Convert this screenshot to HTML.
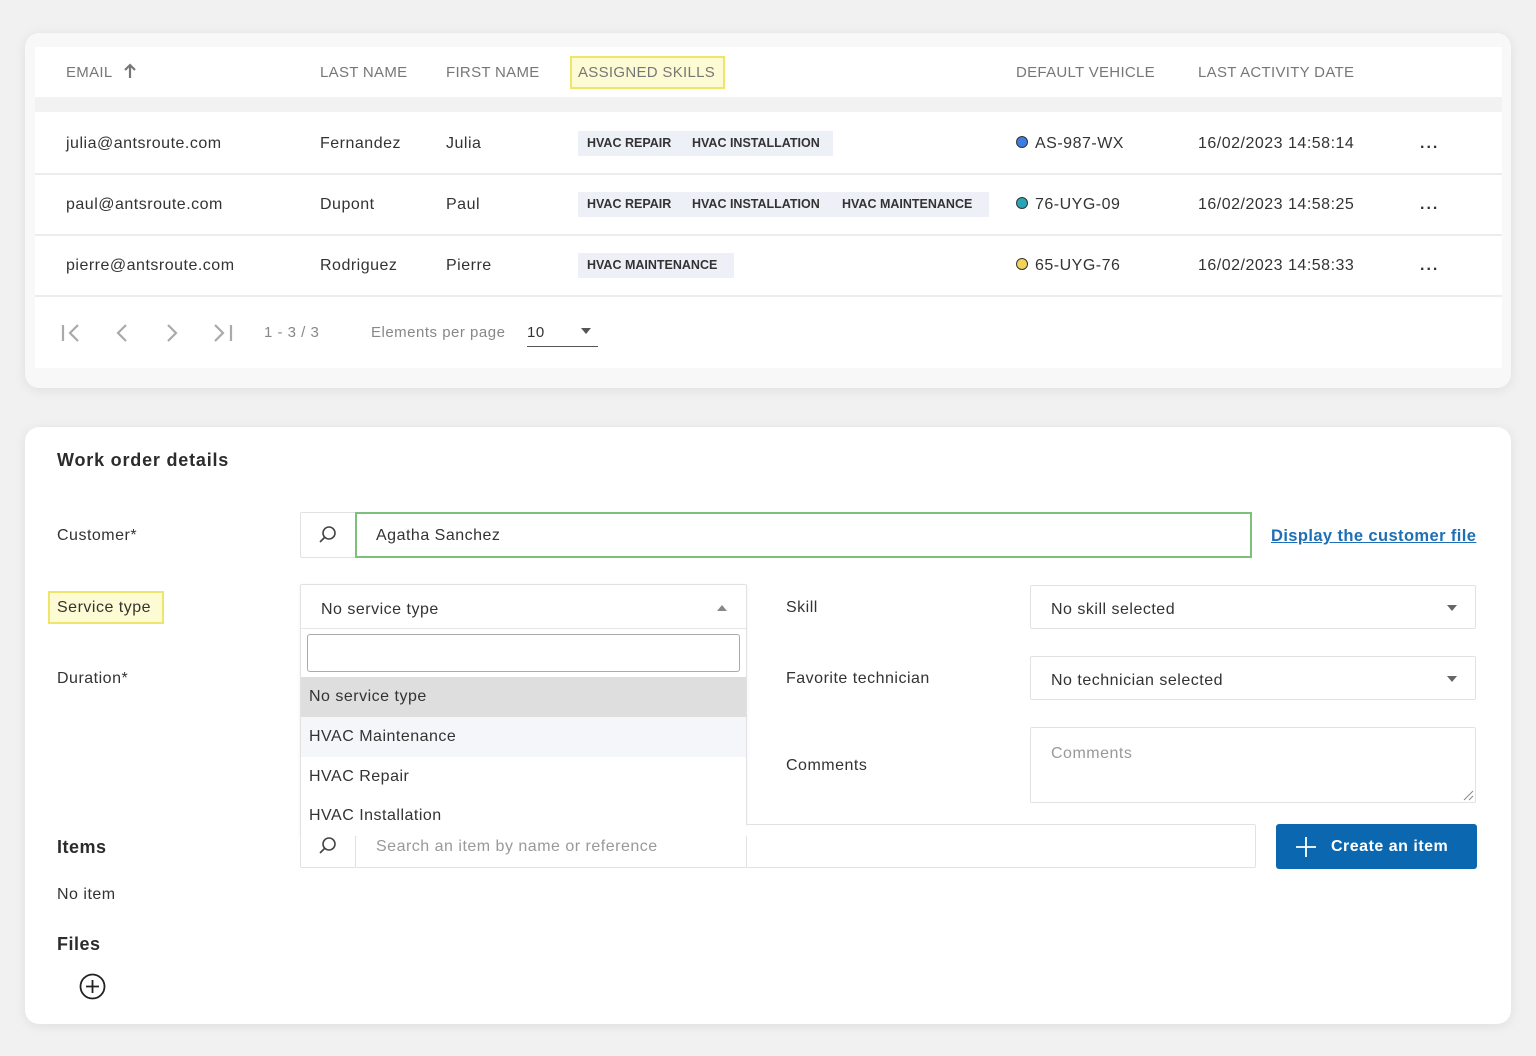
<!DOCTYPE html>
<html><head><meta charset="utf-8">
<style>
*{margin:0;padding:0;box-sizing:border-box}
body{width:1536px;height:1056px;background:#f1f1f1;font-family:"Liberation Sans",sans-serif;color:#333;position:relative;overflow:hidden}
.a{position:absolute}
.t{position:absolute;white-space:nowrap;line-height:18px;font-size:16px;letter-spacing:0.5px}
.card{position:absolute;border-radius:14px;box-shadow:0 2px 12px rgba(0,0,0,.08)}
.hd{color:#777;font-size:15px;letter-spacing:0.3px}
.chip{position:absolute;top:0;height:25px;background:#edf0f7;font-size:12.5px;font-weight:bold;color:#333;line-height:25px;padding-left:9px}
.dot{position:absolute;width:12px;height:12px;border-radius:50%;border:1.5px solid #333}
.box{position:absolute;border:1px solid #e2e2e2;background:#fff;border-radius:2px}
.tri{position:absolute;width:0;height:0;border-left:5px solid transparent;border-right:5px solid transparent}
</style></head><body>

<div class="card" style="left:25px;top:33px;width:1486px;height:355px;background:#f8f8f8"></div>
<div class="a" style="left:35px;top:47px;width:1467px;height:321px;background:#fff"></div>
<div class="a" style="left:35px;top:97px;width:1467px;height:15px;background:#f2f2f2"></div>
<div class="a" style="left:35px;top:173px;width:1467px;height:2px;background:#ececec"></div>
<div class="a" style="left:35px;top:234px;width:1467px;height:2px;background:#ececec"></div>
<div class="a" style="left:35px;top:295px;width:1467px;height:2px;background:#ececec"></div>

<div class="t hd" style="left:66px;top:64px">EMAIL</div>
<svg class="a" style="left:123px;top:63px" width="14" height="16" viewBox="0 0 14 16"><path d="M7 15V2M2 7l5-5 5 5" stroke="#777" stroke-width="2.2" fill="none"/></svg>
<div class="t hd" style="left:320px;top:64px">LAST NAME</div>
<div class="t hd" style="left:446px;top:64px">FIRST NAME</div>
<div class="a" style="left:570px;top:56px;width:155px;height:33px;background:#fdfbd4;border:2px solid #eee56a"></div>
<div class="t hd" style="left:578px;top:64px">ASSIGNED SKILLS</div>
<div class="t hd" style="left:1016px;top:64px">DEFAULT VEHICLE</div>
<div class="t hd" style="left:1198px;top:64px">LAST ACTIVITY DATE</div>

<div class="t" style="left:66px;top:135px">julia@antsroute.com</div>
<div class="t" style="left:320px;top:135px">Fernandez</div>
<div class="t" style="left:446px;top:135px">Julia</div>
<div class="a" style="left:578px;top:131px"><div class="chip" style="left:0;width:105px">HVAC REPAIR</div><div class="chip" style="left:105px;width:150px">HVAC INSTALLATION</div></div>
<div class="dot" style="left:1016px;top:136px;background:#3b7de0"></div>
<div class="t" style="left:1035px;top:135px">AS-987-WX</div>
<div class="t" style="left:1198px;top:135px">16/02/2023 14:58:14</div>
<div class="t" style="left:1420px;top:135px;font-weight:bold;letter-spacing:2px">...</div>

<div class="t" style="left:66px;top:196px">paul@antsroute.com</div>
<div class="t" style="left:320px;top:196px">Dupont</div>
<div class="t" style="left:446px;top:196px">Paul</div>
<div class="a" style="left:578px;top:192px"><div class="chip" style="left:0;width:105px">HVAC REPAIR</div><div class="chip" style="left:105px;width:150px">HVAC INSTALLATION</div><div class="chip" style="left:255px;width:156px">HVAC MAINTENANCE</div></div>
<div class="dot" style="left:1016px;top:197px;background:#2aa5b5"></div>
<div class="t" style="left:1035px;top:196px">76-UYG-09</div>
<div class="t" style="left:1198px;top:196px">16/02/2023 14:58:25</div>
<div class="t" style="left:1420px;top:196px;font-weight:bold;letter-spacing:2px">...</div>

<div class="t" style="left:66px;top:257px">pierre@antsroute.com</div>
<div class="t" style="left:320px;top:257px">Rodriguez</div>
<div class="t" style="left:446px;top:257px">Pierre</div>
<div class="a" style="left:578px;top:253px"><div class="chip" style="left:0;width:156px">HVAC MAINTENANCE</div></div>
<div class="dot" style="left:1016px;top:258px;background:#f2d35a"></div>
<div class="t" style="left:1035px;top:257px">65-UYG-76</div>
<div class="t" style="left:1198px;top:257px">16/02/2023 14:58:33</div>
<div class="t" style="left:1420px;top:257px;font-weight:bold;letter-spacing:2px">...</div>

<svg class="a" style="left:60px;top:322px" width="180" height="22" viewBox="0 0 180 22">
<g stroke="#aaa" stroke-width="2.2" fill="none">
<path d="M3 3v16M18 3l-8 8 8 8"/><path d="M66 3l-8 8 8 8"/><path d="M108 3l8 8-8 8"/><path d="M155 3l8 8-8 8M171 3v16"/></g></svg>
<div class="t" style="left:264px;top:324px;color:#888;font-size:15px">1 - 3 / 3</div>
<div class="t" style="left:371px;top:324px;color:#888;font-size:15px">Elements per page</div>
<div class="t" style="left:527px;top:324px;font-size:15px">10</div>
<div class="a" style="left:527px;top:346px;width:71px;height:1px;background:#555"></div>
<div class="tri" style="left:581px;top:328px;border-top:6px solid #555"></div>

<div class="card" style="left:25px;top:427px;width:1486px;height:597px;background:#fff"></div>
<div class="t" style="left:57px;top:451px;font-size:18px;font-weight:bold;color:#2c2c2c;letter-spacing:0.8px">Work order details</div>

<div class="t" style="left:57px;top:527px">Customer*</div>
<div class="box" style="left:300px;top:512px;width:56px;height:46px"></div>
<svg class="a" style="left:318px;top:525px" width="20" height="20" viewBox="0 0 20 20"><circle cx="11" cy="8" r="6" stroke="#444" stroke-width="1.6" fill="none"/><path d="M7 12l-5 5" stroke="#444" stroke-width="1.6"/></svg>
<div class="a" style="left:355px;top:512px;width:897px;height:46px;border:2px solid #7cc07c;background:#fff"></div>
<div class="t" style="left:376px;top:527px">Agatha Sanchez</div>
<div class="t" style="left:1271px;top:527px;color:#1e6fb5;font-weight:bold;text-decoration:underline;font-size:16.5px;letter-spacing:0.4px">Display the customer file</div>

<div class="a" style="left:48px;top:591px;width:116px;height:33px;background:#fdfbd4;border:2px solid #eee56a"></div>
<div class="t" style="left:57px;top:599px">Service type</div>
<div class="box" style="left:300px;top:584px;width:447px;height:253px;box-shadow:0 1px 4px rgba(0,0,0,.06)"></div>
<div class="a" style="left:301px;top:628px;width:445px;height:1px;background:#e6e6e6"></div>
<div class="t" style="left:321px;top:601px">No service type</div>
<div class="tri" style="left:717px;top:605px;border-bottom:6px solid #888"></div>
<div class="a" style="left:307px;top:634px;width:433px;height:38px;border:1.5px solid #aaa;border-radius:3px"></div>
<div class="a" style="left:301px;top:677px;width:445px;height:40px;background:#dedede"></div>
<div class="t" style="left:309px;top:688px">No service type</div>
<div class="a" style="left:301px;top:717px;width:445px;height:40px;background:#f4f6f9"></div>
<div class="t" style="left:309px;top:728px">HVAC Maintenance</div>
<div class="t" style="left:309px;top:768px">HVAC Repair</div>
<div class="t" style="left:309px;top:807px">HVAC Installation</div>

<div class="t" style="left:57px;top:670px">Duration*</div>

<div class="t" style="left:786px;top:599px">Skill</div>
<div class="box" style="left:1030px;top:585px;width:446px;height:44px"></div>
<div class="t" style="left:1051px;top:601px">No skill selected</div>
<div class="tri" style="left:1447px;top:605px;border-top:6px solid #666"></div>

<div class="t" style="left:786px;top:670px">Favorite technician</div>
<div class="box" style="left:1030px;top:656px;width:446px;height:44px"></div>
<div class="t" style="left:1051px;top:672px">No technician selected</div>
<div class="tri" style="left:1447px;top:676px;border-top:6px solid #666"></div>

<div class="t" style="left:786px;top:757px">Comments</div>
<div class="box" style="left:1030px;top:727px;width:446px;height:76px"></div>
<div class="t" style="left:1051px;top:745px;color:#999">Comments</div>
<svg class="a" style="left:1462px;top:789px" width="12" height="12"><path d="M2 11L11 2M7 11l4-4" stroke="#888" stroke-width="1"/></svg>

<div class="box" style="left:746px;top:824px;width:510px;height:44px;border-left:none"></div>
<div class="box" style="left:300px;top:836px;width:56px;height:32px;border-top:none"></div>
<div class="box" style="left:355px;top:836px;width:392px;height:32px;border-top:none;border-left:1px solid #e2e2e2"></div>
<svg class="a" style="left:318px;top:836px" width="20" height="20" viewBox="0 0 20 20"><circle cx="11" cy="8" r="6" stroke="#444" stroke-width="1.6" fill="none"/><path d="M7 12l-5 5" stroke="#444" stroke-width="1.6"/></svg>
<div class="t" style="left:376px;top:838px;color:#999">Search an item by name or reference</div>
<div class="a" style="left:1276px;top:824px;width:201px;height:45px;background:#0b68b0;border-radius:3px"></div>
<svg class="a" style="left:1295px;top:836px" width="22" height="22"><path d="M11 1v20M1 11h20" stroke="#fff" stroke-width="1.8"/></svg>
<div class="t" style="left:1331px;top:838px;color:#fff;font-weight:bold;font-size:16px">Create an item</div>

<div class="t" style="left:57px;top:838px;font-size:18px;font-weight:bold;color:#2c2c2c">Items</div>
<div class="t" style="left:57px;top:886px">No item</div>
<div class="t" style="left:57px;top:935px;font-size:18px;font-weight:bold;color:#2c2c2c">Files</div>
<svg class="a" style="left:79px;top:973px" width="27" height="27"><circle cx="13.5" cy="13.5" r="12" stroke="#222" stroke-width="1.8" fill="none"/><path d="M13.5 7v13M7 13.5h13" stroke="#222" stroke-width="1.8"/></svg>

</body></html>
